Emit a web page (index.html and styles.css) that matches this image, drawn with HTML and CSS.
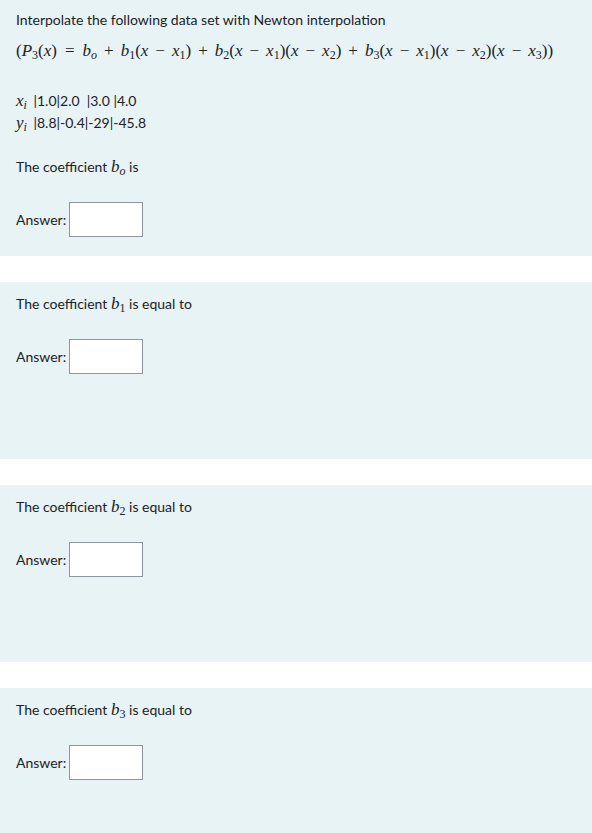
FILE: index.html
```html
<!DOCTYPE html>
<html>
<head>
<meta charset="utf-8">
<link rel="stylesheet" href="styles.css">
</head>
<body>
<div class="que q1">
  <p class="line">Interpolate the following data set with Newton interpolation</p>
  <p class="math formula"><span class="up">(</span><i>P</i><sub>3</sub><span class="up">(</span><i>x</i><span class="up">)</span><span class="op rel">=</span><i>b</i><sub><i>o</i></sub><span class="op">+</span><i>b</i><sub>1</sub><span class="up">(</span><i>x</i><span class="op">−</span><i>x</i><sub>1</sub><span class="up">)</span><span class="op">+</span><i>b</i><sub>2</sub><span class="up">(</span><i>x</i><span class="op">−</span><i>x</i><sub>1</sub><span class="up">)(</span><i>x</i><span class="op">−</span><i>x</i><sub>2</sub><span class="up">)</span><span class="op">+</span><i>b</i><sub>3</sub><span class="up">(</span><i>x</i><span class="op">−</span><i>x</i><sub>1</sub><span class="up">)(</span><i>x</i><span class="op">−</span><i>x</i><sub>2</sub><span class="up">)(</span><i>x</i><span class="op">−</span><i>x</i><sub>3</sub><span class="up">))</span></p>
  <div class="data">
    <p class="line"><span class="math var"><i>x</i><sub><i>i</i></sub></span> |1.0|2.0 &nbsp;|3.0 |4.0</p>
    <p class="line"><span class="math var"><i>y</i><sub><i>i</i></sub></span> |8.8|-0.4|-29|-45.8</p>
  </div>
  <p class="line prompt">The coefficient <span class="math"><i>b</i><sub><i>o</i></sub></span> is</p>
  <div class="answer"><span>Answer:</span><span class="box"></span></div>
</div>
<div class="que">
  <p class="line">The coefficient <span class="math"><i>b</i><sub>1</sub></span> is equal to</p>
  <div class="answer"><span>Answer:</span><span class="box"></span></div>
</div>
<div class="que">
  <p class="line">The coefficient <span class="math"><i>b</i><sub>2</sub></span> is equal to</p>
  <div class="answer"><span>Answer:</span><span class="box"></span></div>
</div>
<div class="que last">
  <p class="line">The coefficient <span class="math"><i>b</i><sub>3</sub></span> is equal to</p>
  <div class="answer"><span>Answer:</span><span class="box"></span></div>
</div>
</body>
</html>
```
FILE: styles.css
```css
html, body {
  margin: 0;
  padding: 0;
  background: #ffffff;
}
body {
  font-family: Lato, "Open Sans", sans-serif;
  font-size: 14px;
  color: #1d2125;
  display: flex;
  flex-direction: column;
  gap: 26px;
}
p { margin: 0; }
.que {
  background: #e7f3f5;
  padding: 12px 16px 0 16px;
  box-sizing: border-box;
  height: 177px;
}
.q1 { height: 256px; padding-top: 10px; }
.last { height: 146px; }
.line {
  line-height: 20px;
  height: 20px;
}
.math {
  font-family: "Liberation Serif", serif;
  font-size: 17px;
}
.math i { font-style: italic; }
.math sub { font-size: 12px; vertical-align: -3px; line-height: 0; }
.math .up { font-style: normal; }
.math .op { padding: 0 7px; }
.math .rel { padding: 0 8px; }
.formula {
  margin-top: 10px;
  height: 22px;
  line-height: 22px;
  white-space: nowrap;
}
.data { margin-top: 29px; display: flex; flex-direction: column; gap: 2px; }
.var { padding-right: 3px; }
.prompt { margin-top: 24px; }
.answer {
  display: flex;
  align-items: center;
  gap: 3px;
  margin-top: 25px;
}
.box {
  width: 72px;
  height: 33px;
  background: #fff;
  border: 1px solid #8f959e;
}
```
